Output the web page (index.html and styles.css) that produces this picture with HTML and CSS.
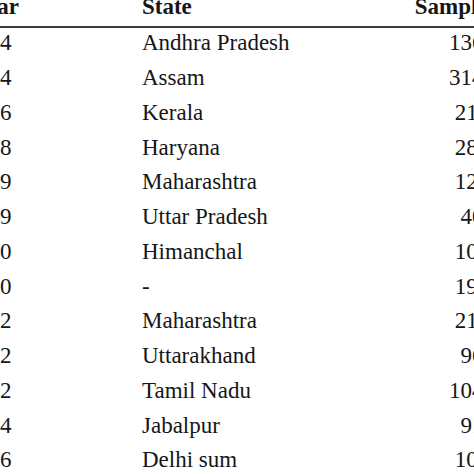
FILE: index.html
```html
<!DOCTYPE html>
<html lang="en">
<head>
<meta charset="utf-8">
<title>Samples by state</title>
<link rel="stylesheet" href="styles.css">
</head>
<body>
<div class="table">
  <div class="cell head year h-year">Year</div>
  <div class="cell head state">State</div>
  <div class="cell head num">Sample size</div>

  <div class="cell year">2004</div><div class="cell state">Andhra Pradesh</div><div class="cell num">1363</div>
  <div class="cell year">2004</div><div class="cell state">Assam</div><div class="cell num">3145</div>
  <div class="cell year">2006</div><div class="cell state">Kerala</div><div class="cell num">215</div>
  <div class="cell year">2008</div><div class="cell state">Haryana</div><div class="cell num">286</div>
  <div class="cell year">2009</div><div class="cell state">Maharashtra</div><div class="cell num">124</div>
  <div class="cell year">2009</div><div class="cell state">Uttar Pradesh</div><div class="cell num">40</div>
  <div class="cell year">2010</div><div class="cell state">Himanchal</div><div class="cell num">106</div>
  <div class="cell year">2010</div><div class="cell state">-</div><div class="cell num">192</div>
  <div class="cell year">2012</div><div class="cell state">Maharashtra</div><div class="cell num">215</div>
  <div class="cell year">2012</div><div class="cell state">Uttarakhand</div><div class="cell num">96</div>
  <div class="cell year">2012</div><div class="cell state">Tamil Nadu</div><div class="cell num">1045</div>
  <div class="cell year">2014</div><div class="cell state">Jabalpur</div><div class="cell num">91</div>
  <div class="cell year">2016</div><div class="cell state">Delhi sum</div><div class="cell num">106</div>
</div>
</body>
</html>
```

FILE: styles.css
```css
html, body {
  margin: 0;
  padding: 0;
  overflow: hidden;
  background: #ffffff;
}

body {
  font-family: "Liberation Serif", "Times New Roman", Tinos, "DejaVu Serif", serif;
  font-size: 23px;
  color: #161616;
  width: 474px;
  height: 474px;
}

.table {
  display: grid;
  grid-template-columns: 182px 258px 144px;
  grid-auto-rows: 34.75px;
  margin-left: -40px;
  margin-top: -6.25px;
  width: 584px;
  font-family: "Liberation Serif", "Times New Roman", serif;
}

.cell {
  line-height: 25px;
  padding-top: 1.75px;
  white-space: nowrap;
  box-sizing: border-box;
  font-family: "Liberation Serif", serif;
}

.head {
  font-weight: bold;
  padding-top: 0;
  height: 34.25px;
  border-bottom: 2px solid #3c3c3c;
}

.year {
  padding-left: 5.5px;
}

.h-year {
  padding-left: 13px;
}

.state {
  padding-left: 0;
}

.num {
  text-align: center;
}
```
